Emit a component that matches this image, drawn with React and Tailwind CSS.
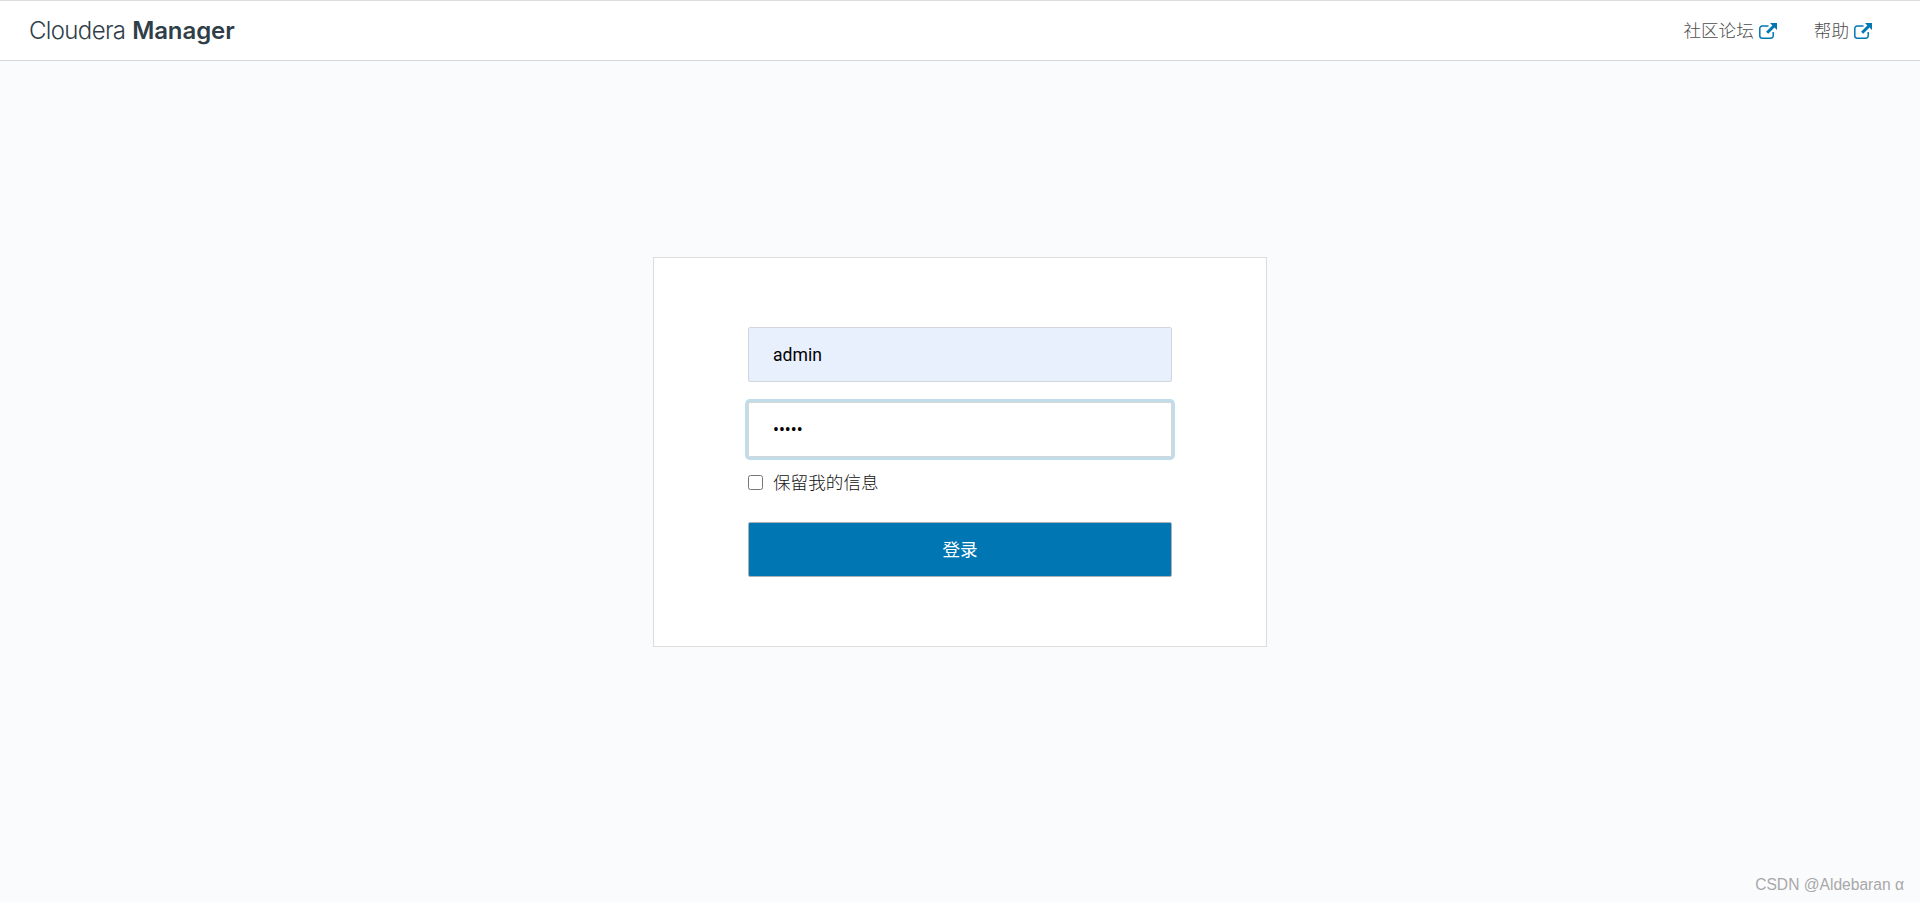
import { useState } from 'react';

function ExternalIcon() {
    return (
        <svg viewBox="0 0 18 16" className="w-[18px] h-[16px] text-[#0077b3] ml-[5px]" fill="none">
            <path d="M9.5 3H3.2A2.4 2.4 0 0 0 .8 5.4v7.4a2.4 2.4 0 0 0 2.4 2.4h8.6a2.4 2.4 0 0 0 2.4-2.4V9" stroke="currentColor" strokeWidth="1.5" />
            <path d="M11 0h7v7l-2.5-2.5-6.3 6.3-2.1-2.1 6.3-6.3z" fill="currentColor" />
        </svg>
    );
}

export default function App() {
    const [remember, setRemember] = useState(false);

    return (
        <div className="h-[902px] overflow-hidden relative bg-[#fafbfd] font-['Roboto','Noto_Sans_CJK_SC',sans-serif] text-[17.6px]">
            <header className="h-[61px] bg-white border-t border-b border-t-[#dcdcdc] border-b-[#d3d6db] flex items-center justify-between pl-[29px] pr-[48px]">
                <div className="font-['Inter',sans-serif] text-[24px] text-[#2f3e48] leading-none pt-[1px]">
                    <span className="font-light tracking-[-0.65px]">Cloudera</span> <span className="font-semibold tracking-[-0.1px]">Manager</span>
                </div>
                <nav className="flex items-center gap-[37px] text-[#4d4d4d] font-light pt-[1px]">
                    <a href="#" className="flex items-center">社区论坛<ExternalIcon /></a>
                    <a href="#" className="flex items-center">帮助<ExternalIcon /></a>
                </nav>
            </header>

            <main className="flex justify-center pt-[196px]">
                <div className="w-[614px] h-[390px] bg-white border border-[#dcdcdf] pt-[69px] px-[94px]">
                    <input
                        readOnly
                        value="admin"
                        className="block w-full h-[55px] px-[24px] bg-[#e8f0fe] border border-[#d3d6dc] rounded-[2px] text-black outline-none"
                    />
                    <input
                        readOnly
                        type="password"
                        value="admin"
                        className="block w-full h-[55px] mt-[20px] px-[24px] bg-white border border-[#d6d6d6] rounded-[2px] text-black outline-none shadow-[0_0_0_3px_#c0dde9]"
                    />
                    <label className="flex items-center mt-[15px] h-[22px] text-[#111111] font-light">
                        <input
                            type="checkbox"
                            checked={remember}
                            onChange={(e) => setRemember(e.target.checked)}
                            className="w-[15px] h-[15px] mr-[10px] -mt-[2px]"
                        />
                        保留我的信息
                    </label>
                    <button className="block w-full h-[55px] mt-[28px] pt-[1px] bg-[#0077b3] border border-[#a9b2b8] rounded-[2px] text-white">
                        登录
                    </button>
                </div>
            </main>

            <div className="absolute right-[16px] bottom-[6px] font-['Liberation_Sans',sans-serif] text-[15.6px] text-[#a8a8a8]">
                CSDN @Aldebaran α
            </div>
        </div>
    );
}
